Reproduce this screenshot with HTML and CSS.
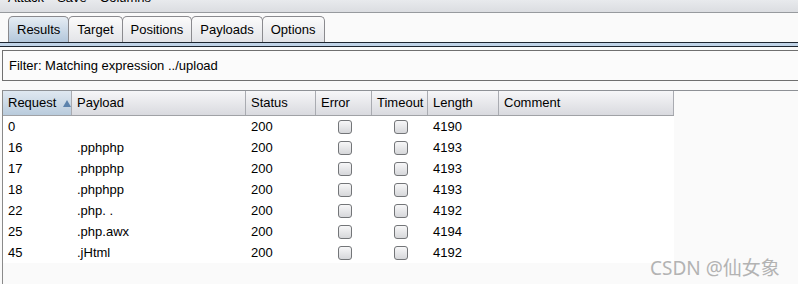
FILE: index.html
```html
<!DOCTYPE html>
<html lang="en">
<head>
    <meta charset="UTF-8">
    <title>Intruder attack results</title>
    <link rel="stylesheet" href="styles.css">
</head>
<body>
    <div class="menubar">
        <ul>
            <li>Attack</li>
            <li>Save</li>
            <li>Columns</li>
        </ul>
    </div>

    <div class="tabs">
        <div class="tab active">Results</div>
        <div class="tab">Target</div>
        <div class="tab">Positions</div>
        <div class="tab">Payloads</div>
        <div class="tab">Options</div>
    </div>
    <div class="tabline"></div>

    <div class="filter">Filter: Matching expression ../upload</div>

    <div class="pane">
        <div class="results">
            <div class="row head">
                <div class="cell sorted">Request
                    <svg class="arrow" width="8" height="7" viewBox="0 0 8 7"><polygon points="4,0 8,7 0,7" fill="#5b82ac"/></svg>
                </div>
                <div class="cell">Payload</div>
                <div class="cell">Status</div>
                <div class="cell">Error</div>
                <div class="cell">Timeout</div>
                <div class="cell">Length</div>
                <div class="cell">Comment</div>
            </div>

            <div class="row">
                <div class="cell">0</div><div class="cell"></div><div class="cell">200</div>
                <div class="cell box"><span class="check"></span></div><div class="cell box"><span class="check"></span></div>
                <div class="cell">4190</div><div class="cell"></div>
            </div>
            <div class="row">
                <div class="cell">16</div><div class="cell">.pphphp</div><div class="cell">200</div>
                <div class="cell box"><span class="check"></span></div><div class="cell box"><span class="check"></span></div>
                <div class="cell">4193</div><div class="cell"></div>
            </div>
            <div class="row">
                <div class="cell">17</div><div class="cell">.phpphp</div><div class="cell">200</div>
                <div class="cell box"><span class="check"></span></div><div class="cell box"><span class="check"></span></div>
                <div class="cell">4193</div><div class="cell"></div>
            </div>
            <div class="row">
                <div class="cell">18</div><div class="cell">.phphpp</div><div class="cell">200</div>
                <div class="cell box"><span class="check"></span></div><div class="cell box"><span class="check"></span></div>
                <div class="cell">4193</div><div class="cell"></div>
            </div>
            <div class="row">
                <div class="cell">22</div><div class="cell">.php. .</div><div class="cell">200</div>
                <div class="cell box"><span class="check"></span></div><div class="cell box"><span class="check"></span></div>
                <div class="cell">4192</div><div class="cell"></div>
            </div>
            <div class="row">
                <div class="cell">25</div><div class="cell">.php.awx</div><div class="cell">200</div>
                <div class="cell box"><span class="check"></span></div><div class="cell box"><span class="check"></span></div>
                <div class="cell">4194</div><div class="cell"></div>
            </div>
            <div class="row">
                <div class="cell">45</div><div class="cell">.jHtml</div><div class="cell">200</div>
                <div class="cell box"><span class="check"></span></div><div class="cell box"><span class="check"></span></div>
                <div class="cell">4192</div><div class="cell"></div>
            </div>
        </div>
    </div>

    <div class="watermark">CSDN @仙女象</div>
</body>
</html>
```

FILE: styles.css
```css
/* General Reset */
* {
    margin: 0;
    padding: 0;
    box-sizing: border-box;
}

body {
    font-family: "Liberation Sans", Arial, sans-serif;
    font-size: 13px;
    background-color: #fafafa;
    color: #000;
    height: 284px;
    overflow: hidden;
    position: relative;
}

/* Menu bar (cut off at the top) */
.menubar {
    height: 13px;
    overflow: hidden;
    background: linear-gradient(#e8eaed, #dbdde1);
    border-bottom: 1px solid #979a9e;
}

.menubar ul {
    list-style: none;
    display: flex;
    margin-top: -10px;
    padding-left: 8px;
    line-height: 15px;
}

.menubar li {
    margin-right: 13px;
}

/* Tabs */
.tabs {
    display: flex;
    height: 29px;
    padding: 3px 0 0 8px;
}

.tab {
    height: 26px;
    line-height: 25px;
    padding: 0 8px;
    margin-right: -1px;
    border: 1px solid #8a8a8e;
    border-bottom: none;
    border-radius: 5px 5px 0 0;
    background: linear-gradient(#fbfbfb, #e3e4e8);
}

.tab.active {
    background: linear-gradient(#e6edf4, #b3c7db);
    position: relative;
    z-index: 1;
}

.tabline {
    height: 5px;
    border-top: 1px solid #1d2530;
    border-bottom: 1px solid #1d2530;
    background-color: #c0d3e7;
}

/* Filter bar */
.filter {
    margin: 3px 0 0 2px;
    height: 31px;
    line-height: 29px;
    padding-left: 6px;
    border: 1px solid #707070;
    border-right: none;
    background-color: #fbfbfb;
}

/* Results table */
.pane {
    margin: 9px 0 0 2px;
    height: 200px;
    border-top: 1px solid #8e9196;
    border-left: 1px solid #8a8a8a;
}

.results {
    width: 671px;
}

.row {
    display: grid;
    grid-template-columns: 69px 174px 70px 56px 56px 71px 175px;
    height: 21px;
    background-color: #fff;
}

.cell {
    padding: 1px 0 0 5px;
    line-height: 20px;
    white-space: nowrap;
    overflow: hidden;
}

.row.head {
    height: 25px;
    border-bottom: 1px solid #a0a2a6;
    background: linear-gradient(#f6f6f8, #d9dadf);
}

.row.head .cell {
    line-height: 23px;
    padding-top: 0;
    border-right: 1px solid #a9abb1;
}

.row.head .cell.sorted {
    background: linear-gradient(#dfe8f1, #b9cbdc);
}

.arrow {
    margin-left: 3px;
    vertical-align: 0;
}

.cell.box {
    display: flex;
    justify-content: center;
    align-items: center;
    padding: 0;
}

.check {
    width: 14px;
    height: 14px;
    border: 1px solid #737578;
    border-radius: 3px;
    background: linear-gradient(#f7f7f8, #d6d7da);
    margin-left: 1px;
}

/* Watermark */
.watermark {
    position: absolute;
    left: 650px;
    top: 253px;
    font-family: "Noto Sans", "Noto Sans CJK SC", sans-serif;
    font-size: 19px;
    color: #b3b3b3;
}
```
